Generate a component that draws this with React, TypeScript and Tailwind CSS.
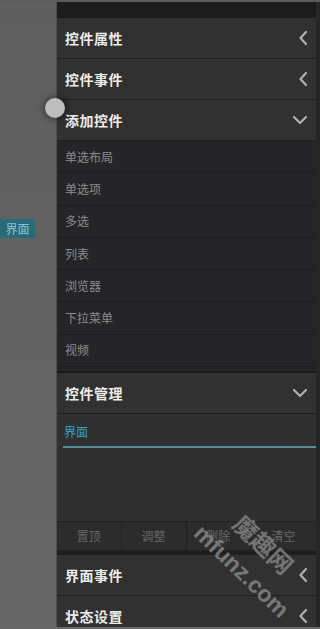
import React from "react";

const Left = () => (
  <svg width="10" height="16" viewBox="0 0 10 16" className="shrink-0">
    <path d="M8 2 L2.5 8 L8 14" fill="none" stroke="#b0b0b0" strokeWidth="2.2" strokeLinecap="round" strokeLinejoin="round" />
  </svg>
);
const Down = () => (
  <svg width="16" height="10" viewBox="0 0 16 10" className="shrink-0">
    <path d="M2 2 L8 8 L14 2" fill="none" stroke="#b0b0b0" strokeWidth="2.2" strokeLinecap="round" strokeLinejoin="round" />
  </svg>
);

const Header = ({ title, open }: { title: string; open?: boolean }) => (
  <div className="h-[41px] shrink-0 flex items-center justify-between pl-[8px] pr-[8px] bg-[#313131] border-b border-[#1f1f1f]">
    <span className="text-[14px] font-bold text-[#ececec] tracking-[0.5px]">{title}</span>
    {open ? <Down /> : <Left />}
  </div>
);

const items = ["单选布局", "单选项", "多选", "列表", "浏览器", "下拉菜单", "视频", ""];

export default function App() {
  return (
    <div
      className="relative w-[320px] h-[629px] overflow-hidden flex flex-col bg-[#1c1c1c]"
      style={{ fontFamily: '"Noto Sans CJK SC", "Noto Sans", sans-serif' }}
    >
      <div className="h-[2px] bg-[#5c5c5c] shrink-0" />
      <div className="flex flex-1 min-h-0">
        <div className="w-[57px] shrink-0 bg-gradient-to-b from-[#5f5f5f] to-[#666666] border-r border-[#4f4f4f] flex flex-col">
          <div className="mt-[217px] w-[35px] h-[19px] bg-[#276a78] flex items-center justify-center">
            <span className="text-[12px] text-[#8fc3cf]">界面</span>
          </div>
        </div>
        <div className="flex-1 flex flex-col bg-[#303030] border-r-[4px] border-[#262626] min-w-0">
          <div className="h-[16px] shrink-0 bg-[#1c1c1c]" />
          <Header title="控件属性" />
          <Header title="控件事件" />
          <Header title="添加控件" open />
          <div className="h-[232px] shrink-0 overflow-hidden bg-[#252528] border-b-[2px] border-[#1c1c1c]">
            {items.map((t, i) => (
              <div key={i} className="h-[32.3px] flex items-center pl-[8px] border-b border-[#1d1d20]">
                <span className="text-[12px] text-[#8c8c8c]">{t}</span>
              </div>
            ))}
          </div>
          <Header title="控件管理" open />
          <div className="h-[107px] shrink-0 bg-[#303030] pl-[6px] pt-[9px]">
            <div className="text-[12px] text-[#3fa2c2] pl-[1px]">界面</div>
            <div className="mt-[5px] h-[2px] bg-[#5b8c98]" />
          </div>
          <div className="h-[30px] shrink-0 grid grid-cols-4 bg-[#2c2c2c] border-t border-b border-[#222]">
            {["置顶", "调整", "删除", "清空"].map((b, i) => (
              <div key={b} className={"flex items-center justify-center text-[12px] text-[#666666]" + (i < 3 ? " border-r border-[#222]" : "")}>
                {b}
              </div>
            ))}
          </div>
          <div className="h-[4px] shrink-0 bg-[#1e1e1e]" />
          <Header title="界面事件" />
          <Header title="状态设置" />
        </div>
      </div>
      <div className="h-[2px] bg-[#6a6a6a] shrink-0" />

      <div className="absolute left-[45px] top-[98px] w-[20px] h-[20px] rounded-full bg-[#bdbdbd] shadow-[0_0_6px_2px_rgba(0,0,0,0.35)]" />

      <div
        className="absolute text-[23px] font-bold leading-[30px] text-[rgba(140,140,140,0.8)] origin-left whitespace-nowrap"
        style={{ transform: "rotate(44deg)", fontFamily: '"Liberation Sans", Arial, sans-serif', top: 514, left: 198 }}
      >
        mfunz.com
      </div>
      <div
        className="absolute text-[24px] font-bold leading-[30px] text-[rgba(140,140,140,0.75)] origin-left whitespace-nowrap"
        style={{ transform: "rotate(44deg)", top: 504, left: 238 }}
      >
        魔趣网
      </div>
    </div>
  );
}
